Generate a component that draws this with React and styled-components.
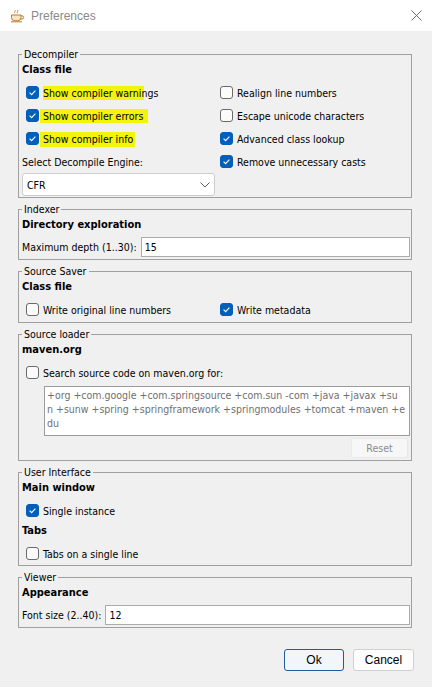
import React from 'react';
import styled, { createGlobalStyle } from 'styled-components';

const GlobalStyle = createGlobalStyle`
  html, body { margin: 0; padding: 0; background: #f0f0f0; }
  body {
    font-family: "DejaVu Sans Condensed", "Liberation Sans", sans-serif;
    font-size: 10.5px;
    color: #000;
  }
  * { box-sizing: border-box; }
`;

const Window = styled.div`
  width: 432px;
  height: 687px;
  background: #f0f0f0;
  display: flex;
  flex-direction: column;
  overflow: hidden;
`;

const TitleBar = styled.div`
  height: 31px;
  flex-shrink: 0;
  background: #fff;
  display: flex;
  align-items: center;
  padding: 0 10px 0 10px;
`;

const TitleText = styled.span`
  flex: 1;
  margin-left: 6px;
  font-family: "Liberation Sans", sans-serif;
  font-size: 12px;
  color: #8a8a8a;
`;

const Body = styled.div`
  display: flex;
  flex-direction: column;
  gap: 4px;
  padding: 16px 20px 0 18px;
`;

const Group = styled.fieldset`
  margin: 0;
  min-width: 0;
  padding: 0 1px ${p => p.$pb ?? 1}px 3px;
  border: 1px solid #a0a0a0;
`;

const Legend = styled.legend`
  padding: 0 2px;
  margin: 0;
  line-height: 14px;
`;

const Heading = styled.div`
  font-weight: bold;
  font-size: 11px;
  line-height: 18px;
  margin-bottom: 2px;
`;

const Grid = styled.div`
  display: grid;
  grid-template-columns: 194px 1fr;
  grid-auto-rows: 23px;
`;

const CheckRow = styled.label`
  display: flex;
  align-items: center;
  gap: 4px;
  height: 23px;
  padding-left: 4px;
  white-space: nowrap;
`;

const Box = styled.span`
  width: 13px;
  height: 13px;
  flex-shrink: 0;
  border-radius: 3px;
  display: flex;
  align-items: center;
  justify-content: center;
  background: ${p => (p.$checked ? '#005fb8' : '#fbfbfb')};
  border: 1px solid ${p => (p.$checked ? '#005fb8' : '#6a6a6a')};
`;

const Hl = styled.span`
  position: relative;
  z-index: 0;
  &::before {
    content: '';
    position: absolute;
    z-index: -1;
    left: ${p => p.$l}px;
    right: ${p => p.$r}px;
    top: ${p => p.$t}px;
    bottom: ${p => p.$b}px;
    background: #f3f30c;
  }
`;

const PlainLabel = styled.div`
  display: flex;
  align-items: center;
  white-space: nowrap;
`;

const Combo = styled.div`
  width: 193px;
  height: 23px;
  background: #fff;
  border: 1px solid #cdcdcd;
  border-radius: 3px;
  display: flex;
  align-items: center;
  justify-content: space-between;
  padding: 0 4px 0 4px;
`;

const FieldRow = styled.div`
  display: flex;
  align-items: center;
  gap: 4px;
  height: 22px;
  white-space: nowrap;
`;

const Input = styled.div`
  flex: 1;
  height: 20px;
  background: #fff;
  border: 1px solid #ababab;
  display: flex;
  align-items: center;
  padding-left: 3px;
`;

const TextArea = styled.div`
  margin: 2px 0 0 22px;
  height: 50px;
  background: #fff;
  border: 1px solid #9c9c9c;
  padding: 1px 2px;
  line-height: 14px;
  color: #707070;
  white-space: pre;
  overflow: hidden;
`;

const ResetRow = styled.div`
  display: flex;
  justify-content: flex-end;
  margin-top: 2px;
  padding-right: 2px;
`;

const SmallButton = styled.div`
  width: 57px;
  height: 20px;
  background: #f7f7f7;
  border: 1px solid #e9e9e9;
  border-radius: 2px;
  display: flex;
  align-items: center;
  justify-content: center;
  color: #8c8c8c;
`;

const Footer = styled.div`
  display: flex;
  justify-content: flex-end;
  gap: 9px;
  margin-top: 21px;
  padding-right: 18px;
`;

const Button = styled.div`
  width: ${p => p.$w}px;
  height: 22px;
  border-radius: 3px;
  display: flex;
  align-items: center;
  justify-content: center;
  font-family: "Liberation Sans", sans-serif;
  font-size: 12px;
  background: ${p => (p.$primary ? '#f2f6fa' : '#fdfdfd')};
  border: 1px solid ${p => (p.$primary ? '#1f5d9a' : '#d0d0d0')};
`;

const CheckMark = () => (
  <svg width="9" height="9" viewBox="0 0 9 9">
    <polyline points="1.6,4.6 3.6,6.6 7.4,2.6" fill="none" stroke="#fff" strokeWidth="1.1" />
  </svg>
);

const Check = ({ checked, children }) => (
  <CheckRow>
    <Box $checked={checked}>{checked && <CheckMark />}</Box>
    <span>{children}</span>
  </CheckRow>
);

const CupIcon = () => (
  <svg width="15" height="14" viewBox="0 0 15 14">
    <path d="M5 4.2 C3.8 3.2 5.8 2.4 5 1.2 M7.6 4.2 C6.6 3 8.4 2.2 7.6 0.8" fill="none" stroke="#c98a45" strokeWidth="1" />
    <path d="M1.5 6 H11 V8.5 A3.2 3.2 0 0 1 7.8 11.7 H4.7 A3.2 3.2 0 0 1 1.5 8.5 Z" fill="#fbe6c4" stroke="#c07a30" strokeWidth="1" />
    <path d="M11 6.8 H12 A1.6 1.6 0 0 1 12 10 H10.6" fill="none" stroke="#c07a30" strokeWidth="1" />
    <path d="M1 12.8 H12" stroke="#c07a30" strokeWidth="1" />
  </svg>
);

const CloseIcon = () => (
  <svg width="11" height="11" viewBox="0 0 11 11">
    <path d="M0.5 0.5 L10.5 10.5 M10.5 0.5 L0.5 10.5" stroke="#5c5c5c" strokeWidth="0.9" />
  </svg>
);

const Chevron = () => (
  <svg width="10" height="6" viewBox="0 0 10 6">
    <polyline points="0.5,0.5 5,5 9.5,0.5" fill="none" stroke="#4a4a4a" strokeWidth="0.9" />
  </svg>
);

export default function App() {
  return (
    <Window>
      <GlobalStyle />
      <TitleBar>
        <CupIcon />
        <TitleText>Preferences</TitleText>
        <CloseIcon />
      </TitleBar>
      <Body>
        <Group $pb={1}>
          <Legend>Decompiler</Legend>
          <Heading>Class file</Heading>
          <Grid>
            <Check checked><Hl $l={0} $r={14} $t={-1} $b={-1}>Show compiler warnings</Hl></Check>
            <Check>Realign line numbers</Check>
            <Check checked><Hl $l={-3} $r={-5} $t={-1} $b={-1}>Show compiler errors</Hl></Check>
            <Check>Escape unicode characters</Check>
            <Check checked><Hl $l={-3} $r={-2} $t={-1} $b={-2}>Show compiler info</Hl></Check>
            <Check checked>Advanced class lookup</Check>
            <PlainLabel>Select Decompile Engine:</PlainLabel>
            <Check checked>Remove unnecessary casts</Check>
            <Combo>
              <span>CFR</span>
              <Chevron />
            </Combo>
          </Grid>
        </Group>

        <Group>
          <Legend>Indexer</Legend>
          <Heading>Directory exploration</Heading>
          <FieldRow>
            <span>Maximum depth (1..30):</span>
            <Input>15</Input>
          </FieldRow>
        </Group>

        <Group $pb={1}>
          <Legend>Source Saver</Legend>
          <Heading>Class file</Heading>
          <Grid>
            <Check>Write original line numbers</Check>
            <Check checked>Write metadata</Check>
          </Grid>
        </Group>

        <Group $pb={2}>
          <Legend>Source loader</Legend>
          <Heading>maven.org</Heading>
          <Check>Search source code on maven.org for:</Check>
          <TextArea>
            {'+org +com.google +com.springsource +com.sun -com +java +javax +su\nn +sunw +spring +springframework +springmodules +tomcat +maven +e\ndu'}
          </TextArea>
          <ResetRow>
            <SmallButton>Reset</SmallButton>
          </ResetRow>
        </Group>

        <Group $pb={0}>
          <Legend>User Interface</Legend>
          <Heading>Main window</Heading>
          <Check checked>Single instance</Check>
          <Heading>Tabs</Heading>
          <Check>Tabs on a single line</Check>
        </Group>

        <Group>
          <Legend>Viewer</Legend>
          <Heading>Appearance</Heading>
          <FieldRow>
            <span>Font size (2..40):</span>
            <Input>12</Input>
          </FieldRow>
        </Group>
      </Body>
      <Footer>
        <Button $w={60} $primary>Ok</Button>
        <Button $w={61}>Cancel</Button>
      </Footer>
    </Window>
  );
}
